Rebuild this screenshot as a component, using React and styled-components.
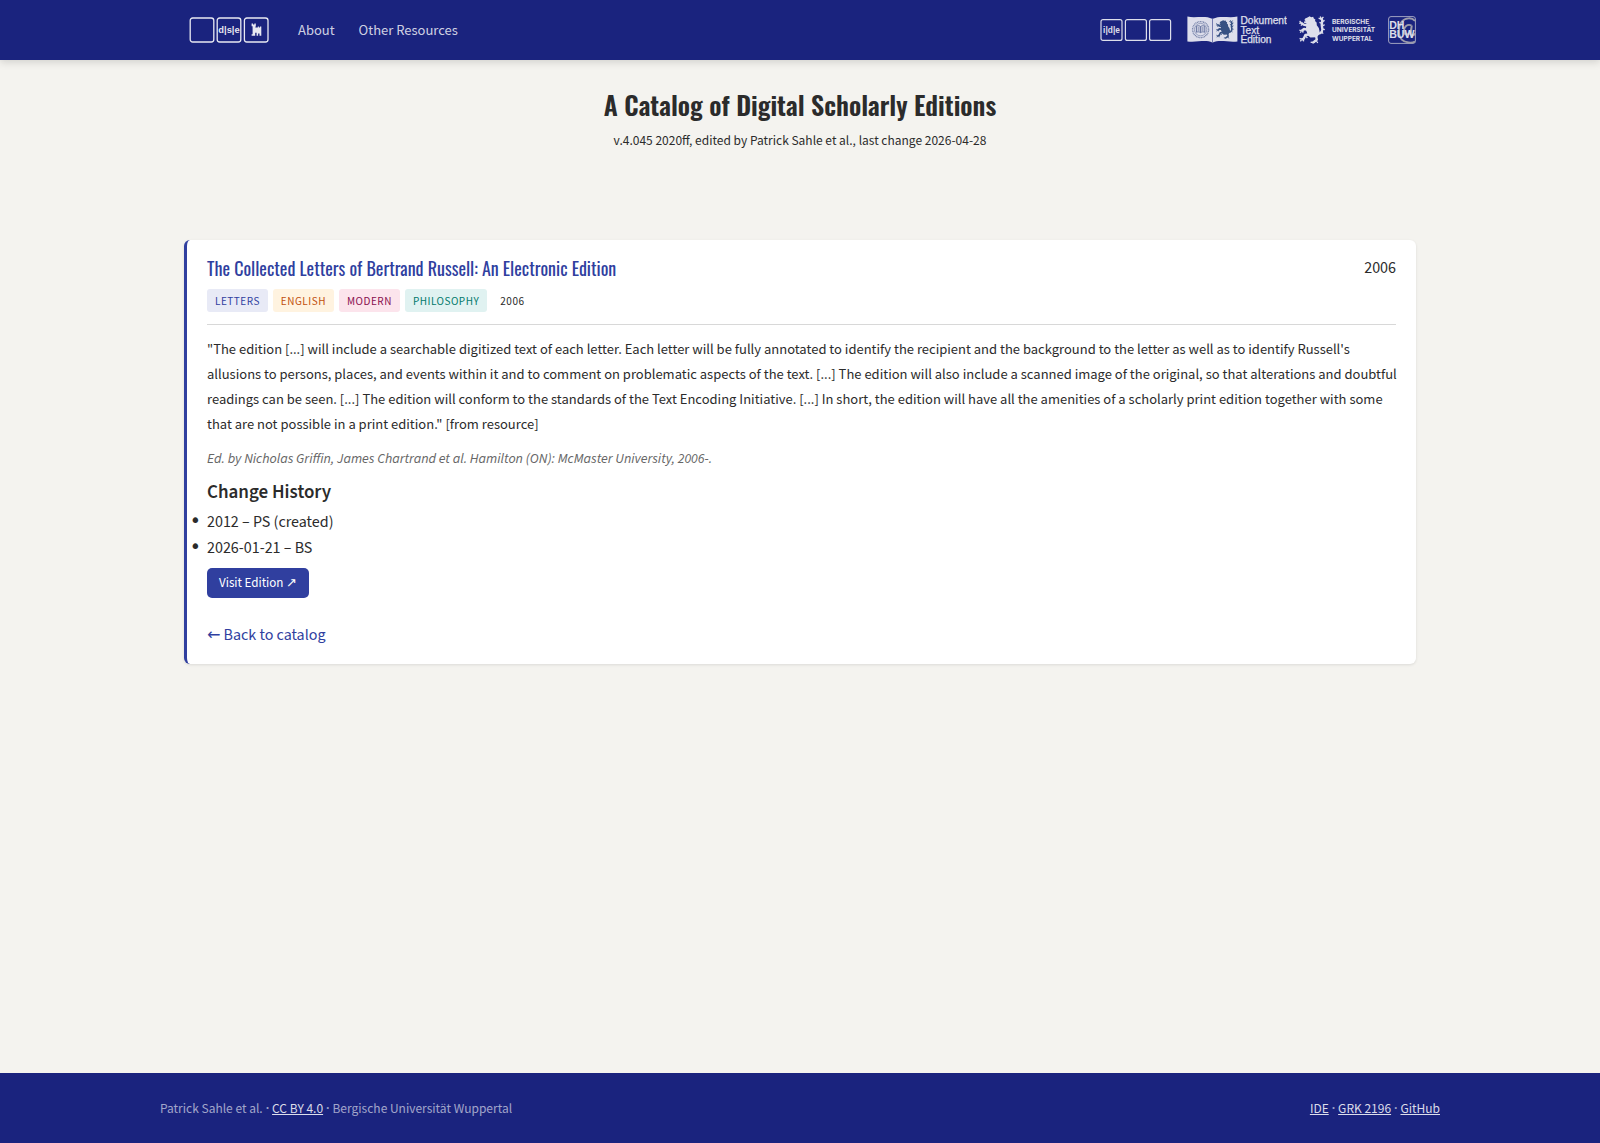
import React from "react";
import styled, { createGlobalStyle } from "styled-components";

const GlobalStyle = createGlobalStyle`
  *, *::before, *::after {
    box-sizing: border-box;
    margin: 0;
    padding: 0;
  }
  body {
    font-family: "Source Sans 3", "Noto Sans CJK SC", "Noto Sans", sans-serif;
    font-size: 16px;
    line-height: 26px;
    color: #2b2b2b;
    background: #f4f3ef;
  }
`;

/* Same letterforms as the body face, drawn larger on the em */
const smallFace = `"Noto Sans CJK SC", "Source Sans 3", "Noto Sans", sans-serif`;

const Page = styled.div`
  display: flex;
  flex-direction: column;
  min-height: 100vh;
`;

const Header = styled.header`
  background: #1a237e;
  box-shadow: 0 2px 8px rgba(0, 0, 0, 0.15);
`;

const Bar = styled.div`
  display: flex;
  align-items: center;
  justify-content: space-between;
  max-width: 1280px;
  height: 60px;
  margin: 0 auto;
  padding: 0 24px;
`;

const Nav = styled.nav`
  display: flex;
  align-items: center;
  gap: 24px;
`;

const BrandLink = styled.a`
  display: flex;
  padding: 0 5px;
`;

const NavLink = styled.a`
  font-family: ${smallFace};
  font-size: 13px;
  line-height: 24px;
  color: rgba(255, 255, 255, 0.8);
  text-decoration: none;
`;

const Logos = styled.div`
  display: flex;
  align-items: center;
  gap: ${({ $gap }) => $gap}px;
`;

const LogoLink = styled.a`
  display: flex;
  opacity: 0.85;
`;

const Main = styled.main`
  flex: 1;
  width: 100%;
  max-width: 1280px;
  margin: 0 auto;
  padding: 24px 24px 40px;
`;

const PageHead = styled.div`
  text-align: center;
  margin-bottom: 89px;
`;

const PageTitle = styled.h1`
  font-family: Oswald, "Roboto Condensed", sans-serif;
  font-size: 26px;
  font-weight: 600;
  line-height: 42px;
`;

const Subtitle = styled.p`
  font-family: ${smallFace};
  font-size: 12px;
  line-height: 22px;
  margin-top: 3px;
`;

const Card = styled.article`
  background: #fff;
  border-left: 3px solid #303f9f;
  border-radius: 6px;
  box-shadow: 0 1px 3px rgba(0, 0, 0, 0.1);
  padding: 16px 20px;
`;

const CardHead = styled.div`
  display: flex;
  align-items: center;
  justify-content: space-between;
  line-height: 24px;
`;

const CardTitle = styled.h2`
  font-family: Oswald, "Roboto Condensed", sans-serif;
  font-size: 18px;
  font-weight: 400;
  line-height: 24px;
  color: #303f9f;
`;

const Tags = styled.div`
  display: flex;
  gap: 5px;
  margin-top: 9px;
  padding-bottom: 12px;
  border-bottom: 1px solid #d8d8d8;
`;

const tones = {
  genre: ["#e8eaf6", "#303f9f"],
  language: ["#fff3e0", "#bf4f0c"],
  period: ["#fce4ec", "#880e4f"],
  subject: ["#e0f2f1", "#00796b"],
  plain: ["transparent", "#2b2b2b"],
};

const Tag = styled.span`
  font-family: ${smallFace};
  font-size: 10px;
  line-height: 23px;
  padding: 0 8px;
  border-radius: 3px;
  letter-spacing: 0.05em;
  text-transform: uppercase;
  background: ${({ $tone }) => tones[$tone][0]};
  color: ${({ $tone }) => tones[$tone][1]};
`;

const Description = styled.p`
  font-family: ${smallFace};
  font-size: 13px;
  line-height: 25px;
  margin: 11px -4px 0 0;
`;

const Citation = styled.p`
  font-size: 14px;
  font-style: italic;
  line-height: 22px;
  margin-top: 12px;
  color: #666;
`;

const SectionTitle = styled.h3`
  font-size: 19px;
  font-weight: 600;
  line-height: 30px;
  margin-top: 8px;
`;

/* The larger marker adds 2px to each line */
const History = styled.ul`
  line-height: 24px;

  li::marker {
    content: "•\\00a0";
    font-family: "DejaVu Sans", sans-serif;
    font-size: 19px;
  }
`;

const Arrow = styled.span`
  font-family: "DejaVu Sans", sans-serif;
  line-height: 1;
`;

const VisitLink = styled.a`
  display: inline-block;
  font-size: 13px;
  line-height: 30px;
  padding: 0 12px;
  margin-top: 8px;
  border-radius: 5px;
  background: #303f9f;
  color: #fff;
  text-decoration: none;
`;

const BackRow = styled.p`
  margin-top: 24px;
`;

const BackLink = styled.a`
  color: #303f9f;
  text-decoration: none;
`;

const Footer = styled.footer`
  background: #1a237e;
  padding: 24px 0;
  font-family: ${smallFace};
  font-size: 12px;
  line-height: 22px;
  color: rgba(255, 255, 255, 0.6);
`;

const FooterInner = styled.div`
  display: flex;
  justify-content: space-between;
  max-width: 1280px;
  margin: 0 auto;
`;

const FooterLink = styled.a`
  color: rgba(255, 255, 255, 0.85);
`;

/* The CJK face sets the middle dot full width, so take it from the body face */
const Dot = styled.span`
  font-family: "Source Sans 3", sans-serif;
  font-size: 16px;
  line-height: 1;
`;

function DseLogo() {
  return (
    <svg width="80" height="26" viewBox="0 0 80 26" role="img" aria-label="dse">
      <g fill="none" stroke="#fff" strokeWidth="1.3" opacity="0.9">
        <rect x="1.2" y="1" width="23.6" height="24" rx="2.5" />
        <rect x="28.2" y="1" width="23.6" height="24" rx="2.5" />
        <rect x="55.4" y="1" width="23.6" height="24" rx="2.5" />
      </g>
      <text x="40" y="16.4" textAnchor="middle" fill="#fff" fillOpacity="0.9" fontFamily="Liberation Sans" fontWeight="700" fontSize="9.4">
        d|s|e
      </text>
      <path
        fill="#fff"
        fillOpacity="0.9"
        d="M62.6 6.6h1.4v1h1.4v-1h1.4v2.8h-.4v1h2.4v-.8h1.1v.8h1v-.8h1.4v9.2h-1.8v-2.2h-1.4v2.2h-1.5v-3h-1.4v3h-3.6v-1.6h1v-8h-1z"
      />
    </svg>
  );
}

function IdeLogo() {
  return (
    <svg width="72" height="24" viewBox="0 0 72 24" role="img" aria-label="ide">
      <g fill="none" stroke="#fff" strokeWidth="1.2">
        <rect x="1" y="1.6" width="21" height="20.8" rx="2" />
        <rect x="25.4" y="1.6" width="21" height="20.8" rx="2" />
        <rect x="49.6" y="1.6" width="21" height="20.8" rx="2" />
      </g>
      <text x="11.5" y="15" textAnchor="middle" fill="#fff" fontFamily="Liberation Sans" fontWeight="700" fontSize="8.4">
        i|d|e
      </text>
    </svg>
  );
}

/* Heraldic lion, drawn on a 26x28 grid */
function Lion({ fill }) {
  return (
    <g fill={fill} stroke={fill} strokeLinejoin="round">
      <path
        stroke="none"
        d="m9 1.2 1.6-1 1.6 1 2-.4.6 1.6 1.6 1-.4 1.6 1.6 1.6.2 2.6 2 2.8.8 3.4-.6 3.2-2.2 2.6-6.4.4-2.6-2.4-1-3.2L6.6 13l.8-2.4L6 9l1.6-1.4L5.2 7 5 5.6l1.8-.4L5.4 4l.8-1.6z"
      />
      <g fill="none" strokeWidth="2.4">
        <path d="M8.5 9.6 4.6 8.6 2 6.6" />
        <path d="M8.5 13.6 5 13l-2.6 2" />
        <path d="m11 18.4-4.6.6-1.6 3.6-2.4 1" />
        <path d="m17 19.4.8 4.2-3.2 2.6" />
        <path d="M18.6 17.8c4.2.2 5.6-3.6 4.4-6.8-1.2-2.8 1.2-4.8-.2-8.4" />
      </g>
      <path
        fill="none"
        strokeWidth="1.3"
        d="M2.2 6.6.6 5M2 6.800l-1.8.6M3.4 8.2 1.8 9.6M2.6 14.8.4 14.2M2.4 15l-1.2 1.6M4 14.4l-.2 2.2M2.6 23.4.6 22.4M2.4 23.6l-1 1.8M4.4 23.4l.2 2M14.8 26l-3.2.4M15.4 26l-1.8 1.4M17.4 25l1.4 2M22 3.4 19.6 2M22.4 3 21.2.4M22.6 3l1.8-2.2M23.4 5.6l2.2-1.2M22.8 7.4l-2.4-1M23.4 10l2.2-1.4M24 13.2l1.8.4M22.6 16l1.6 1.6M7 20.4l1.4 1.6"
      />
    </g>
  );
}

function DteLogo() {
  return (
    <svg width="100" height="30" viewBox="0 0 100 30" role="img" aria-label="Dokument Text Edition">
      <path fill="#fff" d="M.4 1.6C8 3.6 18 .2 25.2 3.8v23.6c-7-3.2-16 .4-24.8-1z" />
      <path fill="#fff" d="M25.8 3.8C34 .2 42 3.6 50.4 1.6v24.8c-8 1.4-17-2.2-24.6 1z" />
      <path fill="none" stroke="#8f96bd" strokeWidth=".7" d="M25.5 3.4v24.4" />
      <g fill="none" stroke="#607198">
        <circle cx="13.6" cy="14.6" r="8" strokeWidth="1.4" strokeDasharray="1 .6" opacity=".75" />
        <circle cx="13.6" cy="14.6" r="6.2" strokeWidth=".5" />
        <path
          strokeWidth=".9"
          d="M9.4 17.2v-6c1.6-.7 3-.5 4.2.4 1.2-.9 2.6-1.1 4.2-.4v6c-1.6-.6-3-.5-4.2.4-1.2-.9-2.6-1-4.2-.4zm4.2.2v-5.8M10.6 13h2m-2 2h2m2-2h2m-2 2h2"
        />
      </g>
      <g transform="translate(29 5) scale(.68 .68)">
        <Lion fill="#3d5a85" />
      </g>
      <g fill="#fff" stroke="#fff" strokeWidth=".25" fontFamily="Liberation Sans" fontSize="10.2">
        <text x="53.4" y="9.4">Dokument</text>
        <text x="53.4" y="18.5">Text</text>
        <text x="53.4" y="27.8">Edition</text>
      </g>
    </svg>
  );
}

function BuwLogo() {
  return (
    <svg width="77" height="28" viewBox="0 0 77 28" role="img" aria-label="Bergische Universität Wuppertal">
      <Lion fill="#fff" />
      <g fill="#fff" fontFamily="Inter" fontWeight="700" fontSize="6.5">
        <text x="33" y="8">BERGISCHE</text>
        <text x="33" y="16.4">UNIVERSITÄT</text>
        <text x="33" y="25">WUPPERTAL</text>
      </g>
    </svg>
  );
}

function DhLogo() {
  return (
    <svg width="28" height="28" viewBox="0 0 28 28" role="img" aria-label="DH BUW">
      <rect x=".6" y=".6" width="26.8" height="26.8" rx="2.4" fill="none" stroke="#c9cbd6" strokeWidth=".9" />
      <g fill="none" stroke="#b4b3b5" strokeWidth="1.9">
        <path d="M27 25.6c-3 1.6-10 1.4-13.2-2C9.6 19 10.4 9.6 14 5.4c3.4-4 10-4 13-.6" />
        <path d="M23.4 9.4c-4.2-1.8-7.6 1.6-7.4 6 .2 4 4.8 4.2 6.6.4l1.2-6.4-1 8c0 2.6 3 2.4 4.4 0" />
      </g>
      <g fill="#fff" fontFamily="Liberation Sans" fontWeight="700" fontSize="10.6">
        <text x="1.2" y="13">DH</text>
        <text x="1.2" y="22.4">BUW</text>
      </g>
    </svg>
  );
}

const tags = [
  { label: "Letters", tone: "genre" },
  { label: "English", tone: "language" },
  { label: "Modern", tone: "period" },
  { label: "Philosophy", tone: "subject" },
  { label: "2006", tone: "plain" },
];

const changes = ["2012 – PS (created)", "2026-01-21 – BS"];

export default function App() {
  return (
    <Page>
      <GlobalStyle />
      <Header>
        <Bar>
          <Nav>
            <BrandLink href="#home"><DseLogo /></BrandLink>
            <NavLink href="#about">About</NavLink>
            <NavLink href="#resources">Other Resources</NavLink>
          </Nav>
          <Logos $gap={15}>
            <LogoLink href="#ide"><IdeLogo /></LogoLink>
            <Logos $gap={12}>
              <LogoLink href="#grk"><DteLogo /></LogoLink>
              <LogoLink href="#buw"><BuwLogo /></LogoLink>
              <LogoLink href="#dh"><DhLogo /></LogoLink>
            </Logos>
          </Logos>
        </Bar>
      </Header>

      <Main>
        <PageHead>
          <PageTitle>A Catalog of Digital Scholarly Editions</PageTitle>
          <Subtitle>v.4.045 2020ff, edited by Patrick Sahle et al., last change 2026-04-28</Subtitle>
        </PageHead>

        <Card>
          <CardHead>
            <CardTitle>The Collected Letters of Bertrand Russell: An Electronic Edition</CardTitle>
            <span>2006</span>
          </CardHead>
          <Tags>
            {tags.map((tag) => (
              <Tag key={tag.label} $tone={tag.tone}>{tag.label}</Tag>
            ))}
          </Tags>
          <Description>
            "The edition [...] will include a searchable digitized text of each letter. Each letter will be fully
            annotated to identify the recipient and the background to the letter as well as to identify Russell's
            allusions to persons, places, and events within it and to comment on problematic aspects of the text.
            [...] The edition will also include a scanned image of the original, so that alterations and doubtful
            readings can be seen. [...] The edition will conform to the standards of the Text Encoding Initiative.
            [...] In short, the edition will have all the amenities of a scholarly print edition together with some
            that are not possible in a print edition." [from resource]
          </Description>
          <Citation>Ed. by Nicholas Griffin, James Chartrand et al. Hamilton (ON): McMaster University, 2006-.</Citation>
          <SectionTitle>Change History</SectionTitle>
          <History>
            {changes.map((change) => (
              <li key={change}>{change}</li>
            ))}
          </History>
          <VisitLink href="#edition">Visit Edition <Arrow>↗</Arrow></VisitLink>
          <BackRow>
            <BackLink href="#catalog"><Arrow>←</Arrow> Back to catalog</BackLink>
          </BackRow>
        </Card>
      </Main>

      <Footer>
        <FooterInner>
          <span>
            Patrick Sahle et al. <Dot>·</Dot> <FooterLink href="#license">CC BY 4.0</FooterLink> <Dot>·</Dot> Bergische
            Universität Wuppertal
          </span>
          <span>
            <FooterLink href="#ide">IDE</FooterLink> <Dot>·</Dot> <FooterLink href="#grk">GRK 2196</FooterLink>{" "}
            <Dot>·</Dot> <FooterLink href="#github">GitHub</FooterLink>
          </span>
        </FooterInner>
      </Footer>
    </Page>
  );
}
